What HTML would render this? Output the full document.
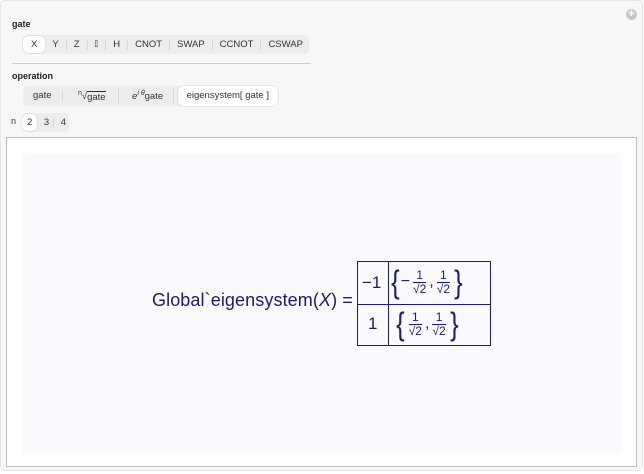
<!DOCTYPE html>
<html><head><style>
*{margin:0;padding:0;box-sizing:border-box}
body{width:644px;height:474px;background:#fff;font-family:"Liberation Sans",sans-serif;position:relative;overflow:hidden}
.panel{position:absolute;left:0;top:0;width:643px;height:471px;background:#f7f7f7;border:1px solid #e4e4e4;border-radius:5px}
.lbl{position:absolute;font-size:9px;font-weight:bold;color:#222}
.bar{position:absolute;height:19px;background:#ececec;border-radius:5px;display:flex;align-items:center;justify-content:space-between;font-size:9.5px;color:#333;padding-right:2px}
.bar span{padding:0 7px;border-right:1px solid #d6d6d6;line-height:10px}
.bar span:last-child{border-right:none}
.sel{background:#fff;border-radius:5px;box-shadow:0 0 1px #999;line-height:17px!important;height:17px;border-right:none!important}
.frame{position:absolute;left:6px;top:137px;width:631px;height:330px;background:#fff;border:1px solid #bdbdbd}
.inner{position:absolute;left:15px;top:15px;width:600px;height:300px;background:#f9f9fe}
.math{color:#1a1a80;position:absolute}
.fr{display:inline-block;vertical-align:middle;text-align:center;font-size:12px;line-height:13px;margin:0 3px}
.fr .n{border-bottom:1px solid #1a1a80;padding:0 2px}
.br{font-size:32px;vertical-align:middle;display:inline-block;transform:scaleX(0.8)}
</style></head><body>
<div class="panel"></div>
<div style="position:absolute;left:626px;top:9px;width:11px;height:11px;border-radius:50%;background:#c8c8c8;color:#fff;font-size:11px;line-height:11px;text-align:center;font-weight:bold">+</div>
<div class="lbl" style="left:12px;top:19px">gate</div>
<div class="bar" style="left:23px;top:35px;width:286px">
<span class="sel" style="padding:0 8px">X</span><span>Y</span><span>Z</span><span>𝕀</span><span>H</span><span>CNOT</span><span>SWAP</span><span>CCNOT</span><span>CSWAP</span></div>
<div style="position:absolute;left:12px;top:63px;width:299px;height:1px;background:#ccc"></div>
<div class="lbl" style="left:12px;top:71px">operation</div>
<div class="bar" style="left:23px;top:86px;width:255px;height:20px;padding-right:0">
<span style="padding:0 10px">gate</span><span style="padding:0 12px"><sup style="font-size:7px">n</sup>√<span style="border-top:1px solid #333;padding:0">gate</span></span><span style="padding:0 10px"><i>e</i><sup style="font-size:7px"><i>i θ</i></sup>gate</span><span class="sel" style="padding:0 9px;height:20px;line-height:20px!important">eigensystem[ gate ]</span></div>
<div style="position:absolute;left:11px;top:116px;font-size:9px;color:#333">n</div>
<div class="bar" style="left:22px;top:113px;width:47px;padding-right:3px">
<span class="sel" style="padding:0 5px">2</span><span style="padding:0 4px">3</span><span style="padding:0 0 0 4px">4</span></div>
<div class="frame"><div class="inner"></div></div>
<div class="math" style="left:152px;top:290px;font-size:18px;letter-spacing:0.1px">Global`eigensystem(<i>X</i>) =</div>
<div class="math" style="left:357px;top:261px;width:134px;height:85px;border:1px solid #1a1a80">
<div style="position:absolute;left:30px;top:0;width:1px;height:83px;background:#1a1a80"></div>
<div style="position:absolute;left:0;top:42px;width:132px;height:1px;background:#1a1a80"></div>
<div style="position:absolute;left:4px;top:11px;font-size:17px">−1</div>
<div style="position:absolute;left:10px;top:52px;font-size:17px">1</div>
<div style="position:absolute;left:32px;top:1px;font-size:16px;white-space:nowrap;line-height:38px"><span class="br">{</span>−<span class="fr"><div class="n">1</div><div>√2</div></span>,<span class="fr"><div class="n">1</div><div>√2</div></span><span class="br">}</span></div>
<div style="position:absolute;left:37px;top:43px;font-size:16px;white-space:nowrap;line-height:38px"><span class="br">{</span><span class="fr"><div class="n">1</div><div>√2</div></span>,<span class="fr"><div class="n">1</div><div>√2</div></span><span class="br">}</span></div>
</div>
</body></html>
